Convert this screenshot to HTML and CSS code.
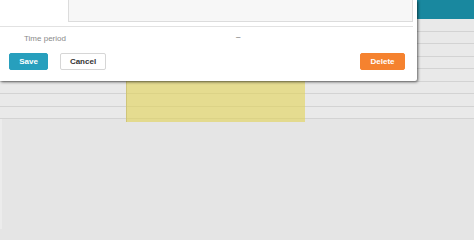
FILE: index.html
```html
<!DOCTYPE html>
<html>
<head>
<meta charset="utf-8">
<link rel="stylesheet" href="styles.css">
</head>
<body>
<div class="calendar">
  <div class="cal-header"></div>
  <div class="cal-rows">
    <div class="row"></div><div class="row"></div><div class="row"></div><div class="row"></div>
    <div class="row"></div><div class="row"></div><div class="row"></div><div class="row"></div>
  </div>
  <div class="cal-empty"></div>
  <div class="event"></div>
</div>
<div class="dialog">
  <div class="field-top">
    <div class="textarea"></div>
  </div>
  <div class="separator"></div>
  <div class="period">
    <span class="label">Time period</span>
    <span class="dash">–</span>
  </div>
  <div class="actions">
    <div class="left-actions">
      <button class="btn btn-save">Save</button>
      <button class="btn btn-cancel">Cancel</button>
    </div>
    <button class="btn btn-delete">Delete</button>
  </div>
</div>
</body>
</html>
```

FILE: styles.css
```css
html, body {
  margin: 0;
  padding: 0;
}
body {
  width: 474px;
  height: 229px;
  overflow: hidden;
  background: #e5e5e5;
  font-family: "Liberation Sans", Arial, sans-serif;
  position: relative;
}
.calendar {
  display: flex;
  flex-direction: column;
  height: 229px;
  position: relative;
}
.cal-header {
  height: 19px;
  background: #19889f;
}
.cal-rows {
  display: flex;
  flex-direction: column;
  background: #e9e9e9;
}
.row {
  height: 11.5px;
  border-bottom: 1px solid #d3d3d3;
}
.cal-empty {
  flex: 1;
  background: #e5e5e5;
  border-left: 2px solid #ececec;
}
.event {
  position: absolute;
  left: 126px;
  top: 60px;
  width: 179px;
  height: 62px;
  background: rgba(226, 210, 80, 0.58);
  border-left: 1px solid #cfc57a;
  box-sizing: border-box;
}
.dialog {
  position: absolute;
  left: 0;
  top: 0;
  width: 417px;
  height: 81px;
  background: #fff;
  box-shadow: 1px 1px 3px rgba(0, 0, 0, 0.6);
  border-bottom-right-radius: 2px;
  display: flex;
  flex-direction: column;
}
.field-top {
  height: 23px;
  padding-left: 68px;
  padding-right: 4px;
  box-sizing: border-box;
}
.textarea {
  height: 22px;
  background: #f7f7f7;
  border: 1px solid #dcdcdc;
  border-top: none;
  box-sizing: border-box;
}
.separator {
  height: 1px;
  background: #e2e2e2;
  margin-top: 3px;
  margin-right: 4px;
}
.period {
  display: flex;
  align-items: center;
  height: 22px;
  padding-left: 24px;
  font-size: 8px;
  color: #8a8a8a;
}
.label {
  width: 212px;
}
.dash {
  color: #555;
  margin-top: -3px;
}
.actions {
  display: flex;
  justify-content: space-between;
  align-items: flex-start;
  padding: 4px 12px 0 9px;
}
.left-actions {
  display: flex;
  gap: 12px;
}
.btn {
  font-family: "Liberation Sans", Arial, sans-serif;
  font-size: 8px;
  font-weight: bold;
  height: 17px;
  padding: 0;
  border-radius: 2px;
  border: 1px solid transparent;
  box-sizing: border-box;
}
.btn-save {
  width: 39px;
  background: #279fbd;
  border-color: #279fbd;
  color: #fff;
}
.btn-cancel {
  width: 46px;
  background: #fff;
  border-color: #d6d6d6;
  color: #333;
}
.btn-delete {
  width: 45px;
  background: #f5822f;
  border-color: #f5822f;
  color: #fff;
}
```
